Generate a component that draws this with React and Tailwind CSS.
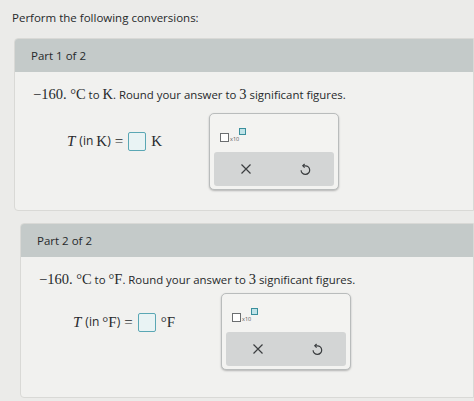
import React from 'react';

const Keypad = () => (
  <div className="w-[130px] h-[77px] rounded-[5px] border border-[#b9bcbc] bg-[#f3f3f1] shadow-[0_1px_2px_rgba(0,0,0,0.25)] flex flex-col px-[4px] pt-[10px] pb-[3px]">
    <div className="flex items-end pl-[6px] h-[22px]">
      <div className="w-[9px] h-[9px] border border-[#6b6e70] bg-white mb-[4px]" />
      <span className="text-[5.5px] text-[#555] leading-none mb-[4px] ml-[1px]">x10</span>
      <div className="w-[7px] h-[7px] border border-[#3a8f9c] bg-[#bfe3e8] mb-[11px]" />
    </div>
    <div className="mt-auto h-[34px] rounded-[3px] bg-[#d3d5d5] flex items-center justify-between pl-[26px] pr-[23px]">
      <svg width="12" height="12" viewBox="0 0 12 12">
        <path d="M1.5 1.5 L10.5 10.5 M10.5 1.5 L1.5 10.5" stroke="#3b3e40" strokeWidth="1.2" fill="none" />
      </svg>
      <svg width="12" height="13" viewBox="0 0 12 13">
        <path d="M4 2.8 L6.2 2.8 A4.3 4.3 0 1 1 2.1 7.2" stroke="#3b3e40" strokeWidth="1.2" fill="none" />
        <path d="M5.6 1 L3.8 2.8 L5.6 4.6" stroke="#3b3e40" strokeWidth="1.2" fill="none" />
      </svg>
    </div>
  </div>
);

const Part = ({ label, target, unit, lhs, className, bodyH, keypadGap, gap, eqTop }) => (
  <div className={`border border-[#d9d9d6] rounded-l-[4px] bg-[#f1f1ef] overflow-hidden ${className}`}>
    <div className="h-[33px] bg-[#c4cac9] flex items-center pl-[16px] text-[11.5px] text-[#26292b]">
      {label}
    </div>
    <div className={`${bodyH} pl-[18px] pt-[13px]`}>
      <p className="text-[11.4px] text-[#26292b] leading-[18px]">
        <span className="font-['Liberation_Serif',serif] text-[14.5px]">−160. °C</span> to{' '}
        <span className="font-['Liberation_Serif',serif] text-[14.5px]">{target}</span>. Round your answer to{' '}
        <span className="font-['Liberation_Serif',serif] text-[14.5px]">3</span> significant figures.
      </p>
      <div className={`flex items-start ${gap}`}>
        <div className={`flex items-center pl-[34px] ${eqTop} ${keypadGap}`}>
          <span className="font-['Liberation_Serif',serif] italic text-[15px] text-[#26292b]">T</span>
          <span className="text-[12px] text-[#26292b] ml-[4px]">(in</span>
          <span className="font-['Liberation_Serif',serif] text-[15px] text-[#26292b] ml-[3px]">{lhs}</span>
          <span className="text-[12px] text-[#26292b]">)</span>
          <span className="font-['Liberation_Serif',serif] text-[15px] text-[#26292b] ml-[4px]">=</span>
          <div className="w-[18px] h-[19px] border border-[#5aa7b4] rounded-[2px] bg-[#e9f3f4] ml-[5px]" />
          <span className="font-['Liberation_Serif',serif] text-[15px] text-[#26292b] ml-[5px]">{unit}</span>
        </div>
        <Keypad />
      </div>
    </div>
  </div>
);

export default function App() {
  return (
    <div className="w-[474px] h-[401px] overflow-hidden bg-[#ebebe9] font-['Open_Sans','DejaVu_Sans',sans-serif] pt-[9px]">
      <h1 className="pl-[12px] text-[11.5px] text-[#26292b] leading-[18px]">Perform the following conversions:</h1>
      <Part
        label="Part 1 of 2"
        target="K"
        unit="K"
        lhs="K"
        className="ml-[14px] mt-[11px]"
        bodyH="h-[138px]"
        keypadGap="w-[176px]"
        gap="mt-[9px]"
        eqTop="pt-[17px]"
      />
      <Part
        label="Part 2 of 2"
        target="°F"
        unit="°F"
        lhs="°F"
        className="ml-[20px] mt-[12px]"
        bodyH="h-[140px]"
        keypadGap="w-[182px]"
        gap="mt-[4px]"
        eqTop="pt-[18px]"
      />
    </div>
  );
}
